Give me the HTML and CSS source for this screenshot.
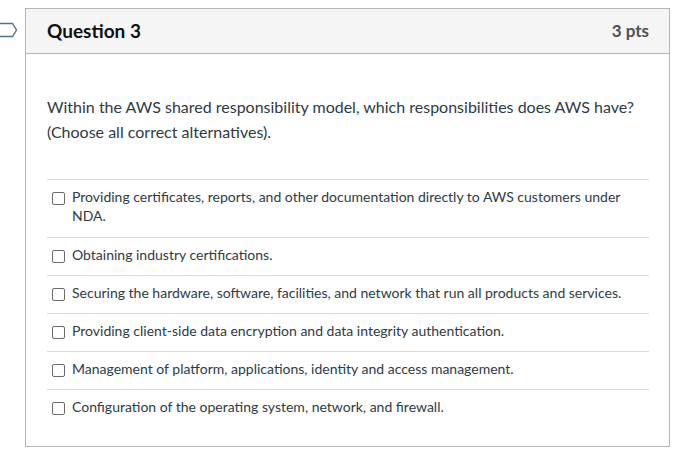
FILE: index.html
```html
<!DOCTYPE html>
<html>
<head>
<meta charset="utf-8">
<link rel="stylesheet" href="styles.css">
</head>
<body>
<div class="page">
  <svg class="marker" width="18" height="16" viewBox="0 0 18 16"><path d="M-2 1.5 H12.5 L16.5 8 L12.5 14.5 H-2" fill="none" stroke="#4f7391" stroke-width="1.4"/></svg>
  <div class="question">
    <div class="header">
      <span class="title">Question 3</span>
      <span class="pts">3 pts</span>
    </div>
    <div class="body">
      <p class="text">Within the AWS shared responsibility model, which responsibilities does AWS have? (Choose all correct alternatives).</p>
      <div class="answers">
        <label class="answer answer-wide"><span class="box"></span><span class="label">Providing certificates, reports, and other documentation directly to AWS customers under NDA.</span></label>
        <label class="answer"><span class="box"></span><span class="label">Obtaining industry certifications.</span></label>
        <label class="answer"><span class="box"></span><span class="label">Securing the hardware, software, facilities, and network that run all products and services.</span></label>
        <label class="answer"><span class="box"></span><span class="label">Providing client-side data encryption and data integrity authentication.</span></label>
        <label class="answer"><span class="box"></span><span class="label">Management of platform, applications, identity and access management.</span></label>
        <label class="answer"><span class="box"></span><span class="label">Configuration of the operating system, network, and firewall.</span></label>
      </div>
    </div>
  </div>
</div>
</body>
</html>
```
FILE: styles.css
```css
html, body { margin: 0; padding: 0; background: #fff; }
body { font-family: Lato, "Open Sans", sans-serif; color: #2d3b45; }
.page { position: relative; padding: 8px 0 0 25px; }
.marker { position: absolute; left: 0; top: 22px; }
.question { width: 643px; border: 1px solid #b5b5b5; }
.header { display: flex; justify-content: space-between; align-items: center; height: 42px; padding: 0 20px 2px 21px; background: #f5f5f5; border-bottom: 1px solid #b5b5b5; }
.title { font-size: 19px; font-weight: 700; color: #111; }
.pts { font-size: 17px; font-weight: 700; color: #505050; }
.body { padding: 0 20px 19px 21px; }
.text { margin: 0; padding: 40px 0 0; font-size: 16px; line-height: 25px; color: #2d3b45; height: 84px; box-sizing: border-box; }
.answers { margin-top: 41px; }
.answer { display: flex; align-items: flex-start; border-top: 1px solid #dcdcdc; padding: 7px 0 11px 5px; font-size: 14px; line-height: 19px; color: #2d3b45; }
.answer-wide { padding-bottom: 12px; }
.box { flex: none; width: 11px; height: 11px; border: 1px solid #6b6b6b; border-radius: 2px; margin: 5px 7px 0 0; }
.label { max-width: 560px; }
```
